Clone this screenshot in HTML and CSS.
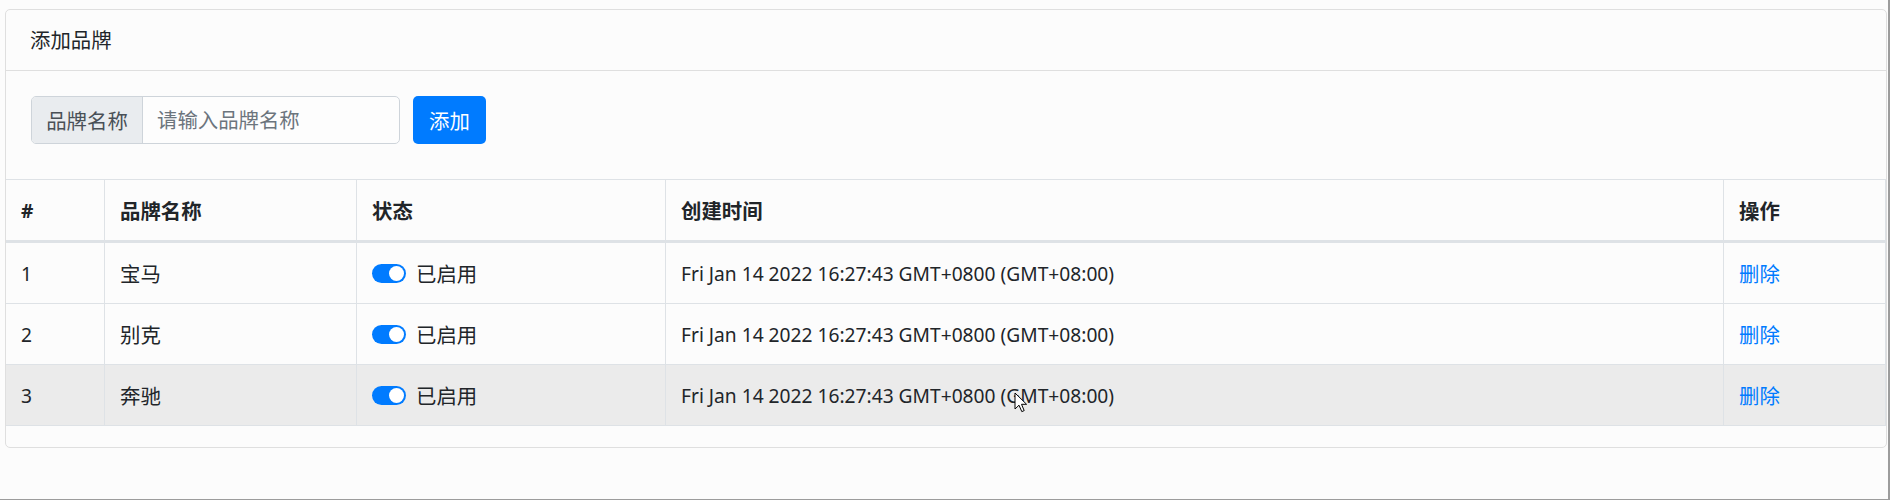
FILE: index.html
```html
<!DOCTYPE html>
<html lang="zh-CN">
<head>
<meta charset="utf-8">
<title>品牌管理</title>
<link rel="stylesheet" href="styles.css">
</head>
<body>
<div class="frame">
  <div class="card">
    <div class="card-header">添加品牌</div>
    <div class="card-body">
      <form class="add-form" onsubmit="return false">
        <div class="input-group">
          <span class="prepend">品牌名称</span>
          <input class="input" type="text" placeholder="请输入品牌名称">
        </div>
        <button class="btn" type="submit">添加</button>
      </form>
    </div>
    <table class="brand-table">
      <thead>
        <tr>
          <th class="c-id">#</th>
          <th class="c-name zh">品牌名称</th>
          <th class="c-status zh">状态</th>
          <th class="c-time zh">创建时间</th>
          <th class="c-op zh">操作</th>
        </tr>
      </thead>
      <tbody>
        <tr>
          <td>1</td>
          <td class="zh">宝马</td>
          <td><span class="status"><span class="switch"><span class="knob"></span></span><span class="zh">已启用</span></span></td>
          <td>Fri Jan 14 2022 16:27:43 GMT+0800 (GMT+08:00)</td>
          <td><a class="link zh" href="#">删除</a></td>
        </tr>
        <tr>
          <td>2</td>
          <td class="zh">别克</td>
          <td><span class="status"><span class="switch"><span class="knob"></span></span><span class="zh">已启用</span></span></td>
          <td>Fri Jan 14 2022 16:27:43 GMT+0800 (GMT+08:00)</td>
          <td><a class="link zh" href="#">删除</a></td>
        </tr>
        <tr class="hover">
          <td>3</td>
          <td class="zh">奔驰</td>
          <td><span class="status"><span class="switch"><span class="knob"></span></span><span class="zh">已启用</span></span></td>
          <td class="time-cell">Fri Jan 14 2022 16:27:43 GMT+0800 (GMT+08:00)<svg class="cursor" width="14" height="22" viewBox="0 0 14 22"><path d="M1 1 L1 17 L5 13.2 L7.8 19.6 L10.2 18.6 L7.5 12.3 L12.6 12.3 Z" fill="#ffffff" stroke="#000000" stroke-width="1" stroke-linejoin="round"/></svg></td>
          <td><a class="link zh" href="#">删除</a></td>
        </tr>
      </tbody>
    </table>
  </div>
</div>
</body>
</html>
```

FILE: styles.css
```css
* { box-sizing: border-box; }
html, body { margin: 0; padding: 0; }
body {
  background: #fcfcfc;
  color: #212529;
  font-family: "Noto Sans", "Noto Sans CJK SC", sans-serif;
  font-size: 19.2px;
}
.zh { font-size: 20.4px; }
.frame {
  width: 1890px;
  height: 500px;
  padding: 9px 0 0 5px;
  border-right: 2px solid #9c9c9c;
  border-bottom: 1px solid #9c9c9c;
}
.card {
  width: 1882px;
  border: 1px solid #dfdfdf;
  border-radius: 5px;
  background: #fcfcfc;
  overflow: hidden;
}
.card-header {
  height: 61px;
  padding-left: 24px;
  display: flex;
  align-items: center;
  border-bottom: 1px solid #dfdfdf;
  line-height: 1;
  font-size: 20.4px;
}
.card-body {
  padding: 25px 25px 35px;
}
.add-form {
  display: flex;
  gap: 13px;
  margin: 0;
}
.input-group {
  display: flex;
  height: 48px;
  width: 369px;
  border: 1px solid #ced4da;
  border-radius: 5px;
  overflow: hidden;
  background: #fdfdfd;
}
.prepend {
  width: 111px;
  flex: none;
  display: flex;
  align-items: center;
  justify-content: center;
  background: #e9ecef;
  border-right: 1px solid #ced4da;
  color: #495057;
  font-size: 20.4px;
}
.input {
  flex: 1;
  min-width: 0;
  border: 0;
  outline: none;
  padding: 0 14px;
  font: inherit;
  font-size: 20.4px;
  background: transparent;
  color: #495057;
}
.input::placeholder { color: #6c757d; opacity: 1; }
.btn {
  height: 48px;
  width: 73px;
  border: 0;
  border-radius: 5px;
  background: #007bff;
  color: #ffffff;
  font: inherit;
  font-size: 20.4px;
  padding: 0;
  cursor: pointer;
}
.brand-table {
  width: 1880px;
  margin: 0 0 21px 0;
  border-collapse: separate;
  border-spacing: 0;
  border-top: 1px solid #dee2e6;
  table-layout: fixed;
}
.brand-table th,
.brand-table td {
  border-right: 1px solid #dee2e6;
  border-bottom: 1px solid #dee2e6;
  padding: 0 15px;
  height: 61px;
  text-align: left;
  vertical-align: middle;
  white-space: nowrap;
}
.brand-table th {
  font-weight: 700;
  height: 63px;
  border-bottom: 3px solid #dee2e6;
}
.c-id { width: 99px; }
.c-name { width: 252px; }
.c-status { width: 309px; }
.c-time { width: 1058px; }
.c-op { width: 162px; }
.brand-table tr.hover td { background: #ebebeb; }
.status {
  display: inline-flex;
  align-items: center;
  gap: 10px;
}
.switch {
  width: 34px;
  height: 19px;
  border-radius: 10px;
  background: #007bff;
  display: inline-flex;
  align-items: center;
  justify-content: flex-end;
  padding-right: 2px;
}
.knob {
  width: 15px;
  height: 15px;
  border-radius: 50%;
  background: #ffffff;
}
.link {
  color: #007bff;
  text-decoration: none;
}
.time-cell { position: relative; }
.cursor {
  position: absolute;
  left: 348px;
  top: 27px;
}
```
